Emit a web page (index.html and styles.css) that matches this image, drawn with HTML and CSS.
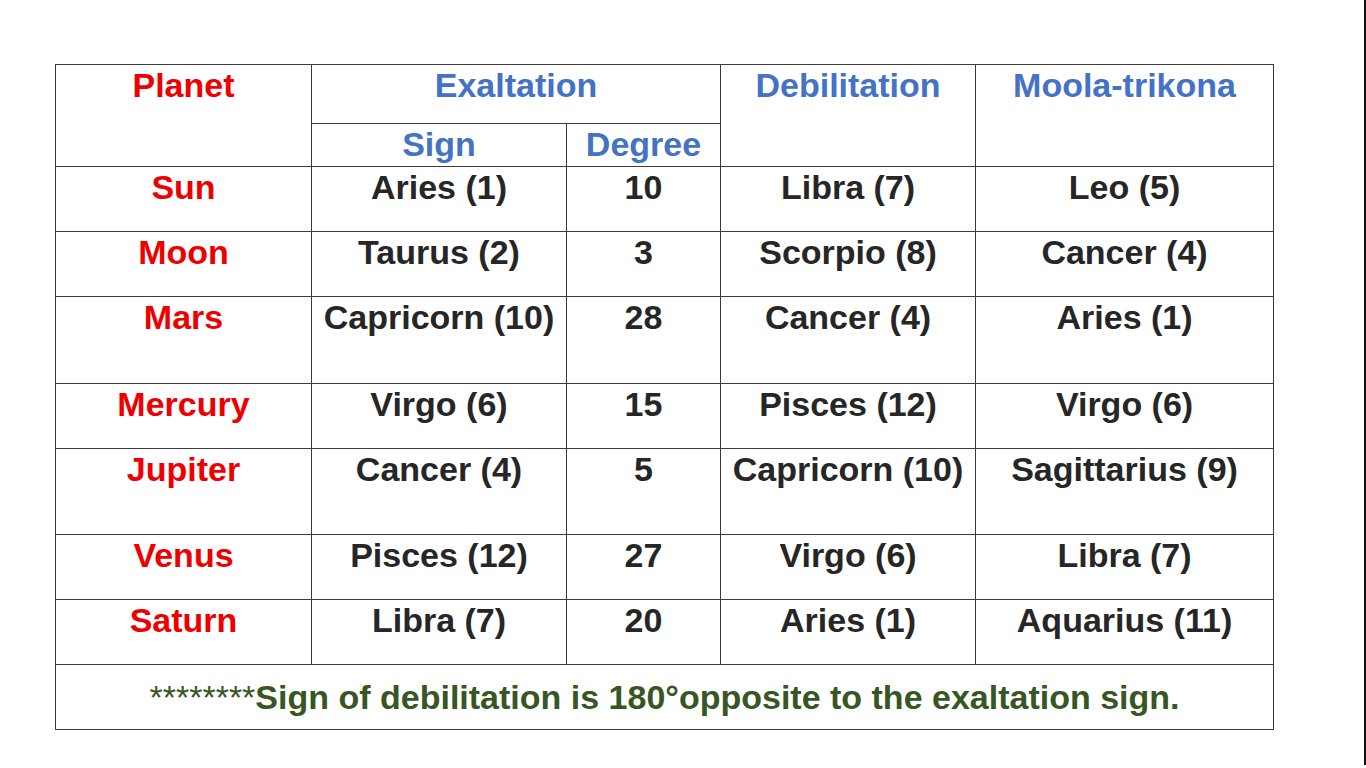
FILE: index.html
```html
<!DOCTYPE html>
<html>
<head>
<meta charset="utf-8">
<link rel="stylesheet" href="styles.css">
</head>
<body>
<div class="slide">
  <table class="grid">
    <colgroup>
      <col class="c-planet">
      <col class="c-sign">
      <col class="c-degree">
      <col class="c-deb">
      <col class="c-moola">
    </colgroup>
    <tr class="h1">
      <td rowspan="2" class="planet">Planet</td>
      <td colspan="2" class="head">Exaltation</td>
      <td rowspan="2" class="head">Debilitation</td>
      <td rowspan="2" class="head">Moola-trikona</td>
    </tr>
    <tr class="h2">
      <td class="head">Sign</td>
      <td class="head">Degree</td>
    </tr>
    <tr class="r"><td class="planet">Sun</td><td>Aries (1)</td><td>10</td><td>Libra (7)</td><td>Leo (5)</td></tr>
    <tr class="r"><td class="planet">Moon</td><td>Taurus (2)</td><td>3</td><td>Scorpio (8)</td><td>Cancer (4)</td></tr>
    <tr class="r tall"><td class="planet">Mars</td><td>Capricorn (10)</td><td>28</td><td>Cancer (4)</td><td>Aries (1)</td></tr>
    <tr class="r"><td class="planet">Mercury</td><td>Virgo (6)</td><td>15</td><td>Pisces (12)</td><td>Virgo (6)</td></tr>
    <tr class="r tall2"><td class="planet">Jupiter</td><td>Cancer (4)</td><td>5</td><td>Capricorn (10)</td><td>Sagittarius (9)</td></tr>
    <tr class="r"><td class="planet">Venus</td><td>Pisces (12)</td><td>27</td><td>Virgo (6)</td><td>Libra (7)</td></tr>
    <tr class="r"><td class="planet">Saturn</td><td>Libra (7)</td><td>20</td><td>Aries (1)</td><td>Aquarius (11)</td></tr>
    <tr class="foot"><td colspan="5" class="note"><span class="stars">********</span>Sign of debilitation is 180°opposite to the exaltation sign.</td></tr>
  </table>
</div>
</body>
</html>
```

FILE: styles.css
```css
html, body {
  margin: 0;
  padding: 0;
  background: #ffffff;
}
.slide {
  box-sizing: border-box;
  width: 1366px;
  height: 765px;
  padding: 64px 0 0 55px;
  border-right: 2px solid #111;
  background: #fff;
}
.grid {
  border-collapse: collapse;
  table-layout: fixed;
  width: 1218px;
  font-family: "Liberation Sans", Arial, sans-serif;
  font-weight: bold;
  font-size: 34px;
  line-height: 39px;
  color: #262626;
  border: 1px solid #6e6e6e;
}
.c-planet { width: 256px; }
.c-sign { width: 255px; }
.c-degree { width: 154px; }
.c-deb { width: 255px; }
.c-moola { width: 298px; }
.grid td {
  border: 1px solid #3c3c3c;
  padding: 1px 0 0 0;
  text-align: center;
  vertical-align: top;
  white-space: nowrap;
  overflow: hidden;
}
.h1 { height: 59px; }
.h2 { height: 43px; }
.h2 td { padding-top: 1px; }
.r { height: 65px; }
.r.tall { height: 87px; }
.r.tall2 { height: 86px; }
.foot { height: 65px; }
.planet { color: #ee0000; }
.head { color: #4472c4; }
.grid td.note {
  color: #375623;
  vertical-align: middle;
  padding: 0;
}
.stars {
  font-weight: normal;
  font-size: 34px;
}
```
